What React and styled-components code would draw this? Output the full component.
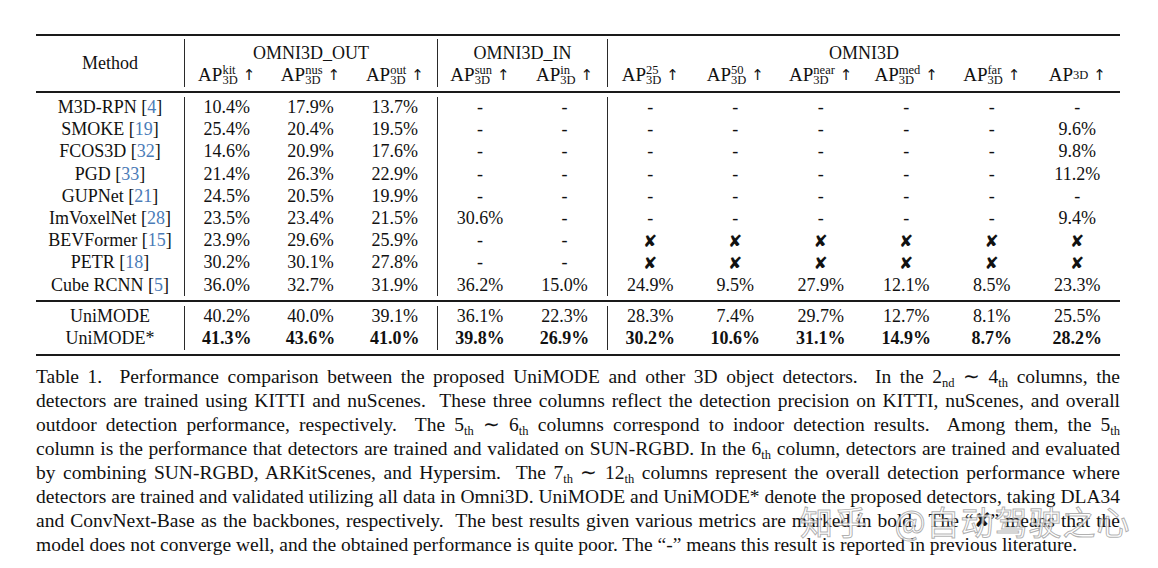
import React from "react";
import styled, { createGlobalStyle, css } from "styled-components";

const GlobalStyle = createGlobalStyle`
  html, body {
    margin: 0;
    background: #ffffff;
  }
  body {
    font-family: "Liberation Serif", "Times New Roman", serif;
    color: #111111;
  }
`;

const X = "✘";

const BODY_ROWS = [
  ["M3D-RPN", 4, ["10.4%", "17.9%", "13.7%", "-", "-", "-", "-", "-", "-", "-", "-"]],
  ["SMOKE", 19, ["25.4%", "20.4%", "19.5%", "-", "-", "-", "-", "-", "-", "-", "9.6%"]],
  ["FCOS3D", 32, ["14.6%", "20.9%", "17.6%", "-", "-", "-", "-", "-", "-", "-", "9.8%"]],
  ["PGD", 33, ["21.4%", "26.3%", "22.9%", "-", "-", "-", "-", "-", "-", "-", "11.2%"]],
  ["GUPNet", 21, ["24.5%", "20.5%", "19.9%", "-", "-", "-", "-", "-", "-", "-", "-"]],
  ["ImVoxelNet", 28, ["23.5%", "23.4%", "21.5%", "30.6%", "-", "-", "-", "-", "-", "-", "9.4%"]],
  ["BEVFormer", 15, ["23.9%", "29.6%", "25.9%", "-", "-", X, X, X, X, X, X]],
  ["PETR", 18, ["30.2%", "30.1%", "27.8%", "-", "-", X, X, X, X, X, X]],
  ["Cube RCNN", 5, ["36.0%", "32.7%", "31.9%", "36.2%", "15.0%", "24.9%", "9.5%", "27.9%", "12.1%", "8.5%", "23.3%"]],
];

const OURS = [
  ["UniMODE", false, ["40.2%", "40.0%", "39.1%", "36.1%", "22.3%", "28.3%", "7.4%", "29.7%", "12.7%", "8.1%", "25.5%"]],
  ["UniMODE*", true, ["41.3%", "43.6%", "41.0%", "39.8%", "26.9%", "30.2%", "10.6%", "31.1%", "14.9%", "8.7%", "28.2%"]],
];

const METRICS = [
  ["kit", "3D"], ["nus", "3D"], ["out", "3D"],
  ["sun", "3D"], ["in", "3D"],
  ["25", "3D"], ["50", "3D"], ["near", "3D"], ["med", "3D"], ["far", "3D"], [null, "3D"],
];

// first column of each dataset group gets a vertical rule
const LEAD = [0, 3, 5];

const Page = styled.div`
  width: 1084px;
  padding: 34px 0 0 36px;
`;

const Rule = styled.div`
  height: ${(p) => p.$w || 1}px;
  background: #1a1a1a;
`;

const columns = css`
  display: grid;
  grid-template-columns: 148px repeat(3, 84.333px) repeat(2, 85px) repeat(6, 85.5px);
`;

const HeadBand = styled.div`
  ${columns};
  grid-template-rows: 24px 24px;
  margin: 3px 0 4px;
`;

const Band = styled.div`
  ${columns};
  grid-auto-rows: ${(p) => p.$row}px;
  margin: 4px 0;
`;

const Cell = styled.div`
  display: flex;
  align-items: center;
  justify-content: center;
  font-size: 18px;
  white-space: nowrap;
  font-weight: ${(p) => (p.$bold ? 700 : 400)};
  border-left: ${(p) => (p.$lead ? "1px solid #2a2a2a" : "none")};
`;

const MethodHead = styled(Cell)`
  grid-row: 1 / span 2;
  grid-column: 1;
`;

const GroupHead = styled(Cell)`
  grid-row: 1;
  grid-column: ${(p) => p.$col};
  padding-top: 4px;
`;

const Metric = styled(Cell)`
  grid-row: 2;
  font-size: 19px;
`;

const Scripts = styled.span`
  display: inline-flex;
  flex-direction: column;
  font-size: 12.5px;
  line-height: 10px;
  vertical-align: 6px;
  margin: 0 1px 0 0;
`;

const Sub = styled.span`
  font-size: 12.5px;
  vertical-align: -4px;
  margin-right: 1px;
`;

const Arrow = styled.span`
  font-family: "DejaVu Sans", sans-serif;
  font-size: 15px;
  margin-left: 4px;
`;

const Cite = styled.span`
  color: #4a7bb7;
`;

const Cross = styled.span`
  font-family: "DejaVu Sans", sans-serif;
  font-size: 17px;
`;

const Caption = styled.div`
  position: relative;
  margin-top: 9px;
  font-size: 19.5px;
  line-height: 24px;
`;

const Line = styled.div`
  height: 24px;
  white-space: ${(p) => (p.$last ? "normal" : "nowrap")};
  text-align: justify;
  text-align-last: ${(p) => (p.$last ? "left" : "justify")};
`;

const Th = styled.span`
  font-size: 12.5px;
  line-height: 0;
  position: relative;
  top: 4px;
`;

const Watermark = styled.div`
  position: absolute;
  left: 764px;
  top: 136px;
  white-space: nowrap;
  font-family: "Noto Sans CJK SC", sans-serif;
  font-size: 33px;
  line-height: 40px;
  word-spacing: 18px;
  letter-spacing: 1px;
  color: rgba(255, 255, 255, 0.72);
  -webkit-text-stroke: 1px rgba(110, 110, 110, 0.55);
  pointer-events: none;
`;

const MetricLabel = ({ sup, sub }) =>
  sup ? (
    <>
      AP
      <Scripts>
        <span>{sup}</span>
        <span>{sub}</span>
      </Scripts>
      <Arrow>↑</Arrow>
    </>
  ) : (
    <>
      AP<Sub>{sub}</Sub>
      <Arrow>↑</Arrow>
    </>
  );

const Value = ({ v }) => (v === X ? <Cross>{X}</Cross> : v);

const App = () => (
  <Page>
    <GlobalStyle />
    <Rule $w={2} />
    <HeadBand>
      <MethodHead>Method</MethodHead>
      <GroupHead $col="2 / span 3" $lead>OMNI3D_OUT</GroupHead>
      <GroupHead $col="5 / span 2" $lead>OMNI3D_IN</GroupHead>
      <GroupHead $col="7 / span 6" $lead>OMNI3D</GroupHead>
      {METRICS.map(([sup, sub], i) => (
        <Metric key={i} $lead={LEAD.includes(i)} style={{ gridColumn: i + 2 }}>
          <MetricLabel sup={sup} sub={sub} />
        </Metric>
      ))}
    </HeadBand>
    <Rule $w={1.5} />
    <Band $row={22.2}>
      {BODY_ROWS.map(([name, ref, vals]) => (
        <React.Fragment key={name}>
          <Cell>
            {name}&nbsp;[<Cite>{ref}</Cite>]
          </Cell>
          {vals.map((v, i) => (
            <Cell key={i} $lead={LEAD.includes(i)}>
              <Value v={v} />
            </Cell>
          ))}
        </React.Fragment>
      ))}
    </Band>
    <Rule $w={1.5} />
    <Band $row={22}>
      {OURS.map(([name, bold, vals]) => (
        <React.Fragment key={name}>
          <Cell>{name}</Cell>
          {vals.map((v, i) => (
            <Cell key={i} $lead={LEAD.includes(i)} $bold={bold}>
              {v}
            </Cell>
          ))}
        </React.Fragment>
      ))}
    </Band>
    <Rule $w={2} />

    <Caption>
      <Line>
        Table 1.&nbsp; Performance comparison between the proposed UniMODE and other 3D object detectors.&nbsp; In
        the 2<Th>nd</Th> ∼ 4<Th>th</Th> columns, the
      </Line>
      <Line>
        detectors are trained using KITTI and nuScenes.&nbsp; These three columns reflect the detection precision on
        KITTI, nuScenes, and overall
      </Line>
      <Line>
        outdoor detection performance, respectively.&nbsp; The 5<Th>th</Th> ∼ 6<Th>th</Th> columns correspond to
        indoor detection results.&nbsp; Among them, the 5<Th>th</Th>
      </Line>
      <Line>
        column is the performance that detectors are trained and validated on SUN-RGBD. In the 6<Th>th</Th> column,
        detectors are trained and evaluated
      </Line>
      <Line>
        by combining SUN-RGBD, ARKitScenes, and Hypersim.&nbsp; The 7<Th>th</Th> ∼ 12<Th>th</Th> columns represent
        the overall detection performance where
      </Line>
      <Line>
        detectors are trained and validated utilizing all data in Omni3D. UniMODE and UniMODE* denote the proposed
        detectors, taking DLA34
      </Line>
      <Line>
        and ConvNext-Base as the backbones, respectively.&nbsp; The best results given various metrics are marked in
        bold.&nbsp; The “✘” means that the
      </Line>
      <Line $last>
        model does not converge well, and the obtained performance is quite poor. The “-” means this result is
        reported in previous literature.
      </Line>
      <Watermark>知乎 @自动驾驶之心</Watermark>
    </Caption>
  </Page>
);

export default App;
